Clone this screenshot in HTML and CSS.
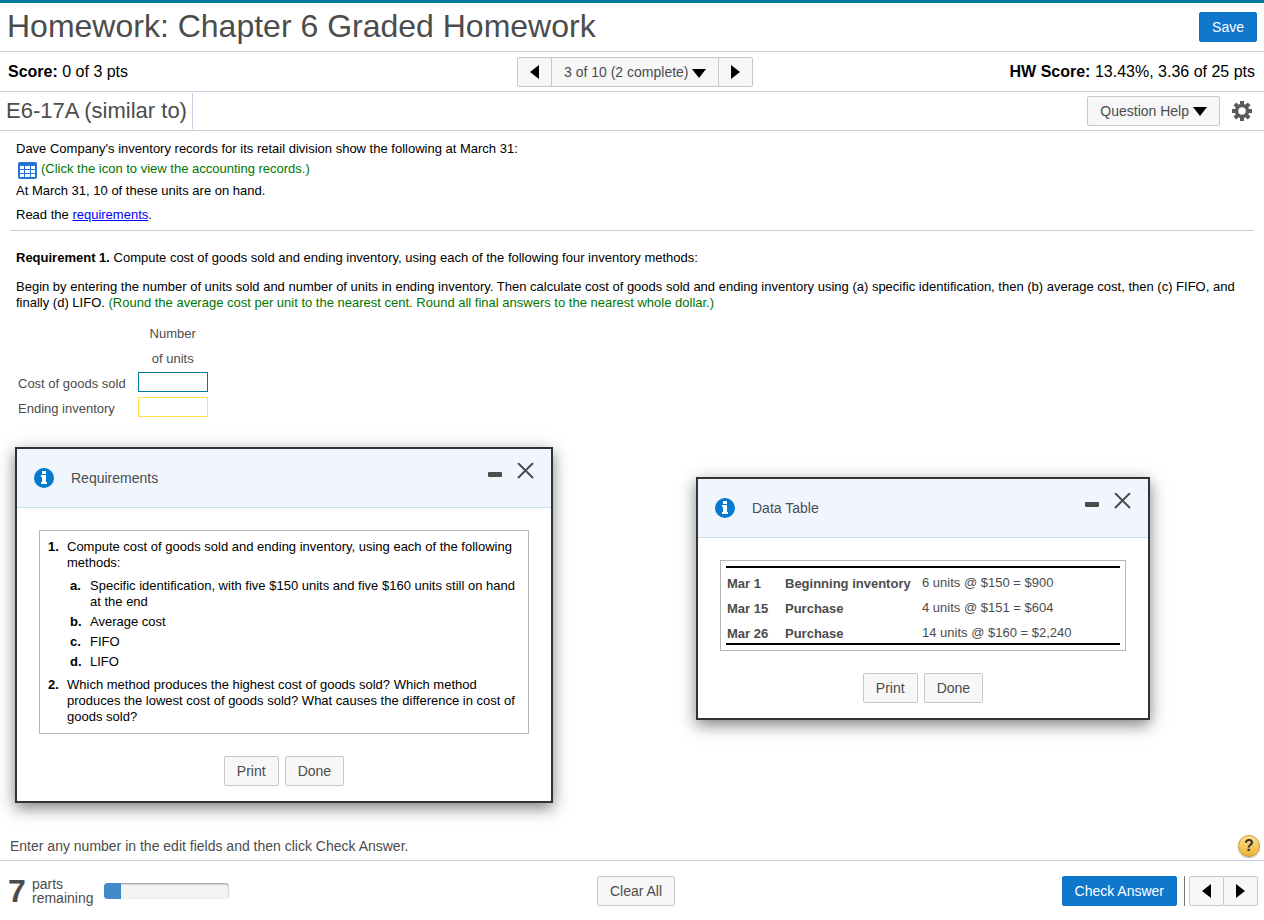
FILE: index.html
```html
<!DOCTYPE html>
<html lang="en">
<head>
    <meta charset="utf-8">
    <title>Homework: Chapter 6 Graded Homework</title>
    <link rel="stylesheet" href="styles.css">
</head>
<body>
    <header class="header">
        <h1>Homework: Chapter 6 Graded Homework</h1>
        <button class="btn btn-primary">Save</button>
    </header>

    <div class="score-bar">
        <div><b>Score:</b> 0 of 3 pts</div>
        <div class="btn-group">
            <button class="btn btn-arrow" aria-label="Previous question"><svg width="9" height="14"><path d="M9 0v14L0 7z"/></svg></button>
            <div class="picker">
                <select aria-label="Question">
                    <option>3 of 10 (2 complete)</option>
                </select>
                <svg class="caret" width="14" height="9"><path d="M0 0h14L7 9z"/></svg>
            </div>
            <button class="btn btn-arrow" aria-label="Next question"><svg width="9" height="14"><path d="M0 0v14l9-7z"/></svg></button>
        </div>
        <div class="hw-score"><b>HW Score:</b> 13.43%, 3.36 of 25 pts</div>
    </div>

    <div class="question-bar">
        <h2>E6-17A (similar to)</h2>
        <div class="question-tools">
            <button class="btn" aria-haspopup="true">Question Help <svg width="14" height="9"><path d="M0 0h14L7 9z"/></svg></button>
            <button class="icon-btn" aria-label="Settings">
                <svg width="20" height="20" viewBox="-10 -10 20 20" fill="#5a5a5a">
                    <g id="teeth">
                        <rect x="-2" y="-10" width="4" height="20"/>
                        <rect x="-10" y="-2" width="20" height="4"/>
                    </g>
                    <use href="#teeth" transform="rotate(45)"/>
                    <circle r="5.5" fill="#fff" stroke="#5a5a5a" stroke-width="3.5"/>
                </svg>
            </button>
        </div>
    </div>

    <main class="main">
        <section class="problem">
            <p>Dave Company's inventory records for its retail division show the following at March 31:</p>
            <p class="records">
                <svg width="19" height="17" viewBox="0 0 19 17">
                    <rect width="19" height="17" rx="2" fill="#2673d6"/>
                    <path fill="#fff" d="M2 4h4v3H2zM7 4h5v3H7zM13 4h4v3h-4zM2 8h4v3H2zM7 8h5v3H7zM13 8h4v3h-4zM2 12h4v3H2zM7 12h5v3H7zM13 12h4v3h-4z"/>
                </svg>
                <span class="note">(Click the icon to view the accounting records.)</span>
            </p>
            <p class="on-hand">At March 31, 10 of these units are on hand.</p>
            <p class="read">Read the <a href="#requirements">requirements</a>.</p>
        </section>

        <section class="work">
            <p class="step"><b>Requirement 1.</b> Compute cost of goods sold and ending inventory, using each of the following four inventory methods:</p>
            <p>Begin by entering the number of units sold and number of units in ending inventory. Then calculate cost of goods sold and ending inventory using (a) specific identification, then (b) average cost, then (c) FIFO, and finally (d) LIFO. <span class="note">(Round the average cost per unit to the nearest cent. Round all final answers to the nearest whole dollar.)</span></p>
            <table class="answers">
                <tr><td></td><th>Number</th></tr>
                <tr><td></td><th>of units</th></tr>
                <tr>
                    <td><label for="cogs">Cost of goods sold</label></td>
                    <td><input type="text" id="cogs" class="active"></td>
                </tr>
                <tr>
                    <td><label for="ending">Ending inventory</label></td>
                    <td><input type="text" id="ending"></td>
                </tr>
            </table>
        </section>

        <div class="dialog dialog-requirements" id="requirements" role="dialog" aria-labelledby="req-title">
            <div class="dialog-header">
                <svg class="info" width="20" height="20" viewBox="0 0 20 20">
                    <circle cx="10" cy="10" r="10" fill="#047acf"/>
                    <path fill="#fff" d="M8 3h4v3H8zM7 7h5v7h1v2H7v-2h1V9H7z"/>
                </svg>
                <h3 id="req-title">Requirements</h3>
                <div class="dialog-controls">
                    <button class="icon-btn" aria-label="Minimize"><svg width="14" height="16"><rect y="9" width="14" height="5" rx="1" fill="#4c4c4c"/></svg></button>
                    <button class="icon-btn" aria-label="Close"><svg width="17" height="16"><path d="M1 0l15 15M16 0L1 15" stroke="#4c4c4c" stroke-width="2"/></svg></button>
                </div>
            </div>
            <div class="dialog-body">
                <div class="box">
                    <ol class="list">
                        <li>
                            <div>
                                Compute cost of goods sold and ending inventory, using each of the following methods:
                                <ol class="sublist">
                                    <li><div>Specific identification, with five $150 units and five $160 units still on hand at the end</div></li>
                                    <li><div>Average cost</div></li>
                                    <li><div>FIFO</div></li>
                                    <li><div>LIFO</div></li>
                                </ol>
                            </div>
                        </li>
                        <li><div>Which method produces the highest cost of goods sold? Which method produces the lowest cost of goods sold? What causes the difference in cost of goods sold?</div></li>
                    </ol>
                </div>
                <div class="dialog-buttons">
                    <button class="btn">Print</button>
                    <button class="btn">Done</button>
                </div>
            </div>
        </div>

        <div class="dialog dialog-data" role="dialog" aria-labelledby="data-title">
            <div class="dialog-header">
                <svg class="info" width="20" height="20" viewBox="0 0 20 20">
                    <circle cx="10" cy="10" r="10" fill="#047acf"/>
                    <path fill="#fff" d="M8 3h4v3H8zM7 7h5v7h1v2H7v-2h1V9H7z"/>
                </svg>
                <h3 id="data-title">Data Table</h3>
                <div class="dialog-controls">
                    <button class="icon-btn" aria-label="Minimize"><svg width="14" height="16"><rect y="9" width="14" height="5" rx="1" fill="#4c4c4c"/></svg></button>
                    <button class="icon-btn" aria-label="Close"><svg width="17" height="16"><path d="M1 0l15 15M16 0L1 15" stroke="#4c4c4c" stroke-width="2"/></svg></button>
                </div>
            </div>
            <div class="dialog-body">
                <div class="box box-table">
                    <table class="records-table">
                        <tr><th class="date">Mar 1</th><th class="event">Beginning inventory</th><td>6 units @ $150 = $900</td></tr>
                        <tr><th>Mar 15</th><th>Purchase</th><td>4 units @ $151 = $604</td></tr>
                        <tr><th>Mar 26</th><th>Purchase</th><td>14 units @ $160 = $2,240</td></tr>
                    </table>
                </div>
                <div class="dialog-buttons">
                    <button class="btn">Print</button>
                    <button class="btn">Done</button>
                </div>
            </div>
        </div>
    </main>

    <div class="hint">
        <span>Enter any number in the edit fields and then click Check Answer.</span>
        <button class="help" aria-label="Help">?</button>
    </div>

    <footer class="footer">
        <div class="parts">
            <b>7</b>
            <span>parts<br>remaining</span>
            <div class="progress" role="progressbar" aria-label="Parts completed" aria-valuenow="13"><div class="progress-fill" style="width: 13%"></div></div>
        </div>
        <button class="btn">Clear All</button>
        <div class="actions">
            <button class="btn btn-primary">Check Answer</button>
            <div class="part-nav">
                <div class="btn-group">
                    <button class="btn btn-arrow" aria-label="Previous part"><svg width="9" height="14"><path d="M9 0v14L0 7z"/></svg></button>
                    <button class="btn btn-arrow" aria-label="Next part"><svg width="9" height="14"><path d="M0 0v14l9-7z"/></svg></button>
                </div>
            </div>
        </div>
    </footer>
</body>
</html>
```
FILE: styles.css
```css
* {
    box-sizing: border-box;
}

body {
    display: flex;
    flex-direction: column;
    min-height: 100vh;
    margin: 0;
    border-top: 3px solid #007a9c;
    background-color: #fff;
    color: #000;
    font-family: "Liberation Sans", Arial, sans-serif;
    font-size: 13px;
    line-height: 16px;
}

h1, h2, h3, p, ol {
    margin: 0;
    padding: 0;
    font-weight: normal;
}

svg {
    display: block;
}

button, select, input {
    margin: 0;
    font-family: inherit;
}

.btn {
    display: flex;
    align-items: center;
    justify-content: center;
    gap: 4px;
    height: 30px;
    padding: 0 12px;
    background-color: #f7f7f7;
    border: 1px solid #c7c7c7;
    border-radius: 2px;
    color: #4c4c4c;
    font-size: 14px;
    white-space: nowrap;
    cursor: pointer;
}

.btn svg, .caret {
    fill: #000;
}

.btn-primary {
    background-color: #0f78cc;
    border-color: #0f70c0;
    color: #fff;
}

.icon-btn {
    padding: 0;
    background: none;
    border: none;
    cursor: pointer;
}

.btn-group {
    display: flex;
}

.btn-group .btn + .btn,
.btn-group .picker + .btn {
    margin-left: -1px;
}

.btn-arrow {
    width: 35px;
    padding: 0;
}

.picker {
    position: relative;
    margin-left: -1px;
}

.picker select {
    height: 30px;
    padding: 0 29px 0 12px;
    appearance: none;
    background-color: #f7f7f7;
    border: 1px solid #c7c7c7;
    border-radius: 0;
    color: #4c4c4c;
    font-size: 14px;
}

.caret {
    position: absolute;
    top: 12px;
    right: 13px;
    pointer-events: none;
}

/* top bars */
.header {
    display: flex;
    align-items: center;
    justify-content: space-between;
    height: 49px;
    padding: 0 7px;
    border-bottom: 1px solid #c9cddb;
}

.header h1 {
    padding-bottom: 2px;
    color: #4c4c4c;
    font-size: 32px;
    line-height: 46px;
}

.score-bar {
    display: grid;
    grid-template-columns: 1fr auto 1fr;
    align-items: center;
    height: 40px;
    padding: 0 2px 0 8px;
    border-bottom: 1px solid #c9cddb;
    font-size: 16px;
}

.hw-score {
    padding-right: 7px;
    text-align: right;
}

.question-bar {
    display: flex;
    align-items: center;
    justify-content: space-between;
    height: 39px;
    border-bottom: 1px solid #c9cddb;
}

.question-bar h2 {
    padding: 0 5px 0 6px;
    border-right: 1px solid #c9cddb;
    color: #4c4c4c;
    font-size: 22px;
    line-height: 36px;
}

.question-tools {
    display: flex;
    align-items: center;
    gap: 12px;
    padding-right: 12px;
}

/* question */
.main {
    position: relative;
    flex: 1;
}

.problem {
    margin: 0 10px;
    padding: 10px 6px 7px;
    border-bottom: 1px solid #c9cddb;
}

.records {
    display: flex;
    gap: 4px;
    padding: 4px 0 0 2px;
}

.records svg {
    margin-top: 1px;
}

.note {
    color: #007500;
}

.on-hand {
    margin-top: 4px;
}

.read {
    margin-top: 8px;
}

.problem a {
    color: #00f;
}

.work {
    padding: 19px 16px 0;
}

.step {
    margin-bottom: 13px;
}

.answers {
    margin-top: 10px;
    border-collapse: collapse;
    color: #4c4c4c;
}

.answers tr {
    height: 25px;
}

.answers th, .answers td {
    padding: 0 2px;
    font-weight: normal;
}

.answers td:first-child {
    padding-right: 10px;
}

.answers input {
    display: block;
    width: 70px;
    height: 20px;
    margin-bottom: 3px;
    padding: 0 2px;
    border: 1px solid #ffdf50;
    font-size: 13px;
}

.answers input.active {
    border-color: #007a9c;
}

/* floating dialogs */
.dialog {
    position: absolute;
    background-color: #fff;
    border: 2px solid #303336;
    box-shadow: 0 5px 15px rgba(0, 0, 0, 0.5);
}

.dialog-requirements {
    top: 316px;
    left: 15px;
    width: 538px;
}

.dialog-data {
    top: 346px;
    left: 696px;
    width: 454px;
}

.dialog-header {
    display: flex;
    align-items: center;
    height: 59px;
    padding: 0 17px;
    background-color: #f1f6fe;
    border-bottom: 1px solid #c3e0f0;
}

.dialog-header h3 {
    flex: 1;
    margin-left: 17px;
    color: #4c4c4c;
    font-size: 14px;
}

.dialog-controls {
    display: flex;
    gap: 15px;
    margin-bottom: 14px;
}

.dialog-body {
    padding: 22px 22px 15px;
}

.box {
    padding: 8px;
    border: 1px solid #b5b5b5;
}

.box-table {
    padding: 5px;
}

.list, .sublist {
    display: flex;
    flex-direction: column;
    list-style: none;
    counter-reset: item;
}

.list {
    gap: 7px;
}

.sublist {
    gap: 4px;
    margin-top: 7px;
    padding-left: 3px;
}

.list li {
    display: flex;
    counter-increment: item;
}

.list li::before {
    content: counter(item) ".";
    flex: none;
    width: 19px;
    font-weight: bold;
}

.sublist li::before {
    content: counter(item, lower-alpha) ".";
    width: 20px;
}

.records-table {
    width: 100%;
    border-collapse: separate;
    border-spacing: 0;
    border-top: 2px solid #000;
    border-bottom: 2px solid #000;
    color: #4c4c4c;
}

.records-table th, .records-table td {
    height: 25px;
    padding: 8px 1px 1px;
    text-align: left;
    vertical-align: top;
}

.records-table td {
    padding: 7px 1px 2px;
}

.date {
    width: 58px;
}

.event {
    width: 137px;
}

.dialog-buttons {
    display: flex;
    justify-content: center;
    gap: 6px;
    margin-top: 22px;
}

/* bottom */
.hint {
    display: flex;
    align-items: center;
    justify-content: space-between;
    height: 29px;
    padding: 0 4px 0 10px;
    color: #4c4c4c;
    font-size: 14px;
}

.help {
    width: 22px;
    height: 22px;
    padding: 0;
    background: linear-gradient(#ffe08a, #f0b435);
    border: 1px solid #c99a3c;
    border-radius: 50%;
    box-shadow: 0 1px 1px rgba(0, 0, 0, 0.3);
    color: #333;
    font-size: 16px;
    font-weight: bold;
    line-height: 20px;
}

.footer {
    display: grid;
    grid-template-columns: 1fr auto 1fr;
    align-items: center;
    height: 60px;
    padding-left: 8px;
    border-top: 1px solid #c9cddb;
}

.parts {
    display: flex;
    align-items: center;
    color: #4c4c4c;
    font-size: 14px;
    line-height: 14px;
}

.parts b {
    width: 24px;
    font-size: 32px;
}

.progress {
    width: 125px;
    height: 16px;
    margin-left: 11px;
    overflow: hidden;
    background-color: #f3f3f3;
    border-radius: 4px;
    box-shadow: inset 0 1px 2px rgba(0, 0, 0, 0.4);
}

.progress-fill {
    height: 100%;
    background-color: #428bca;
}

.actions {
    display: flex;
    justify-content: flex-end;
    gap: 7px;
    padding-right: 6px;
}

.part-nav {
    padding-left: 4px;
    border-left: 1px solid #777;
}
```
